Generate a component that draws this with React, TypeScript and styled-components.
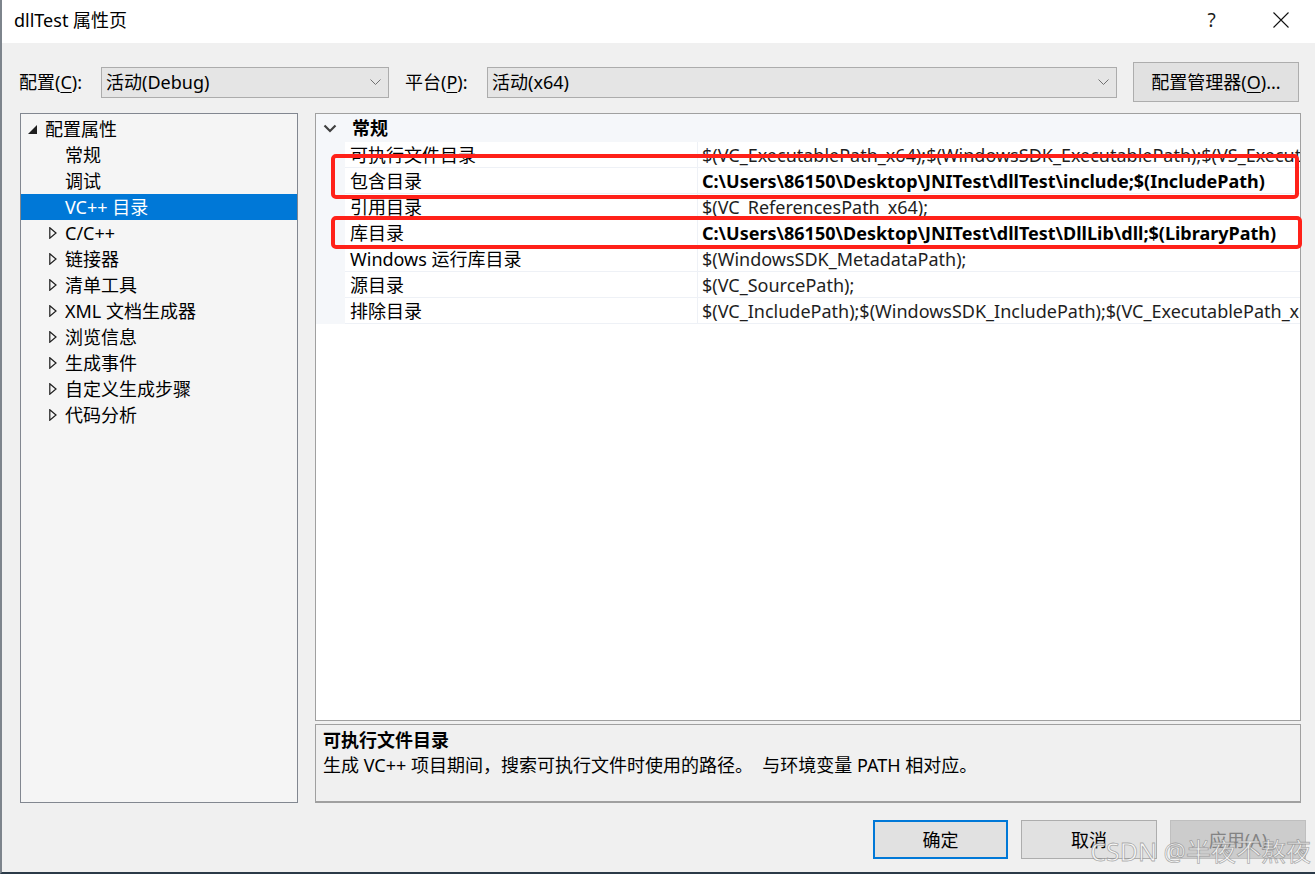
import React from "react";
import styled, { createGlobalStyle } from "styled-components";

const GlobalStyle = createGlobalStyle`
  html, body { margin: 0; padding: 0; }
  body {
    background: #f0f0f0;
    font-family: "Noto Sans", "Noto Sans CJK SC", sans-serif;
    font-size: 18px;
    color: #000;
  }
  * { box-sizing: border-box; }
`;

const Window = styled.div`
  position: relative;
  width: 1315px;
  height: 874px;
  display: flex;
  flex-direction: column;
  background: #f0f0f0;
  border-left: 2px solid #7d848c;
  border-bottom: 2px solid #2b3a48;
  overflow: hidden;
`;

const TitleBar = styled.div`
  height: 43px;
  flex: none;
  background: #fff;
  display: flex;
  align-items: center;
  padding-left: 12px;
`;

const Title = styled.div`
  font-size: 18px;
  line-height: 24px;
  margin-top: -3px;
  flex: 1;
`;

const TitleButton = styled.div`
  width: 69px;
  height: 43px;
  display: flex;
  align-items: center;
  justify-content: center;
  font-size: 19px;
  color: #1a1a1a;
  margin-top: -3px;
`;

const Content = styled.div`
  flex: 1;
  min-width: 0;
  display: flex;
  flex-direction: column;
  padding: 19px 14px 0 17px;
`;

const ConfigRow = styled.div`
  height: 40px;
  display: flex;
  align-items: center;
`;

const FieldLabel = styled.div<{ $ml?: number }>`
  width: 82px;
  margin-left: ${(p) => p.$ml ?? 0}px;
  white-space: nowrap;
  line-height: 24px;
  & u { text-decoration-thickness: 1px; text-underline-offset: 3px; }
`;

const Select = styled.div<{ $w: number }>`
  width: ${(p) => p.$w}px;
  height: 31px;
  background: #e5e5e5;
  border: 1px solid #acacac;
  display: flex;
  align-items: center;
  padding: 0 7px 0 4px;
  line-height: 24px;
`;

const SelectText = styled.span`
  flex: 1;
  white-space: nowrap;
`;

const PushButton = styled.div<{ $w: number; $h?: number; $primary?: boolean; $disabled?: boolean; $ml?: number }>`
  width: ${(p) => p.$w}px;
  height: ${(p) => p.$h ?? 39}px;
  margin-left: ${(p) => p.$ml ?? 0}px;
  flex: none;
  display: flex;
  align-items: center;
  justify-content: center;
  background: ${(p) => (p.$disabled ? "#cccccc" : "#e1e1e1")};
  border: ${(p) => (p.$primary ? "2px solid #0078d7" : p.$disabled ? "1px solid #bfbfbf" : "1px solid #adadad")};
  color: ${(p) => (p.$disabled ? "#838383" : "#000")};
  white-space: nowrap;
  line-height: 24px;
  & u { text-decoration-thickness: 1px; text-underline-offset: 3px; }
`;

const Main = styled.div`
  margin-top: 11px;
  height: 690px;
  display: flex;
  gap: 17px;
`;

const Tree = styled.div`
  width: 278px;
  margin-left: 1px;
  flex: none;
  background: #f5f5f5;
  border: 1px solid #828790;
  padding-top: 2px;
`;

const TreeRow = styled.div<{ $indent: number; $selected?: boolean }>`
  height: 26px;
  display: flex;
  align-items: center;
  padding-left: ${(p) => p.$indent}px;
  background: ${(p) => (p.$selected ? "#0078d7" : "transparent")};
  color: ${(p) => (p.$selected ? "#fff" : "#000")};
  white-space: nowrap;
  line-height: 24px;
`;

const Expander = styled.span<{ $w: number }>`
  width: ${(p) => p.$w}px;
  flex: none;
  display: flex;
  align-items: center;
`;

const RightColumn = styled.div`
  flex: 1;
  min-width: 0;
  display: flex;
  flex-direction: column;
  gap: 3px;
`;

const Grid = styled.div`
  position: relative;
  height: 608px;
  background: #fff;
  border: 1px solid #a0a0a0;
`;

const GridInner = styled.div`
  height: 100%;
  overflow: hidden;
`;

const CategoryRow = styled.div`
  height: 28px;
  display: flex;
  align-items: center;
  background: #f5f7fa;
  padding-left: 7px;
  font-weight: 700;
  line-height: 24px;
`;

const CategoryChevron = styled.span`
  width: 29px;
  flex: none;
  display: flex;
  align-items: center;
`;

const PropRow = styled.div`
  height: 26px;
  display: flex;
  background: #f5f7fa;
`;

const NameCell = styled.div`
  margin-left: 29px;
  width: 352px;
  flex: none;
  background: #fff;
  border-bottom: 1px solid #eef1f6;
  display: flex;
  align-items: center;
  padding-left: 5px;
  white-space: nowrap;
  line-height: 24px;
`;

const ValueCell = styled.div<{ $bold?: boolean }>`
  flex: 1;
  min-width: 0;
  background: #fff;
  border-left: 1px solid #eef1f6;
  border-bottom: 1px solid #eef1f6;
  display: flex;
  align-items: center;
  padding-left: 4px;
  white-space: nowrap;
  overflow: hidden;
  font-weight: ${(p) => (p.$bold ? 700 : 400)};
  color: ${(p) => (p.$bold ? "#000" : "#1e1e1e")};
  line-height: 24px;
`;

const Annotation = styled.div<{ $top: number; $left: number; $w: number; $h: number }>`
  position: absolute;
  top: ${(p) => p.$top}px;
  left: ${(p) => p.$left}px;
  width: ${(p) => p.$w}px;
  height: ${(p) => p.$h}px;
  border: 4px solid #ff2119;
  border-radius: 5px;
  pointer-events: none;
`;

const Description = styled.div`
  height: 79px;
  background: #f0f0f0;
  border: 1px solid #a0a0a0;
  border-bottom-width: 2px;
  padding: 3px 7px;
  line-height: 25px;
  white-space: pre;
`;

const DescTitle = styled.div`
  font-weight: 700;
`;

const Footer = styled.div`
  margin-top: 17px;
  margin-right: -5px;
  display: flex;
  justify-content: flex-end;
  gap: 13px;
`;

const Watermark = styled.div`
  position: absolute;
  right: 4px;
  bottom: 5px;
  font-size: 25px;
  line-height: 32px;
  color: rgba(255, 255, 255, 0.78);
  -webkit-text-stroke: 0.8px rgba(110, 110, 110, 0.55);
  white-space: nowrap;
  pointer-events: none;
`;

const Chevron = () => (
  <svg width="11" height="7" viewBox="0 0 11 7">
    <polyline points="0.5,0.5 5.5,5.5 10.5,0.5" fill="none" stroke="#707070" strokeWidth="1" />
  </svg>
);

const FilledTri = () => (
  <svg width="9" height="9" viewBox="0 0 9 9">
    <polygon points="9,0 9,9 0,9" fill="#1e1e1e" />
  </svg>
);

const OpenTri = () => (
  <svg width="8" height="12" viewBox="0 0 8 12">
    <polygon points="0.8,0.8 7,6 0.8,11.2" fill="none" stroke="#1e1e1e" strokeWidth="1.2" />
  </svg>
);

const CloseIcon = () => (
  <svg width="16" height="16" viewBox="0 0 16 16">
    <path d="M0.5 0.5 L15.5 15.5 M15.5 0.5 L0.5 15.5" stroke="#111" strokeWidth="1.1" />
  </svg>
);

const DownChevron = () => (
  <svg width="14" height="9" viewBox="0 0 14 9">
    <polyline points="1.5,1.5 7,7 12.5,1.5" fill="none" stroke="#404040" strokeWidth="2.2" />
  </svg>
);

const treeItems: { label: string; kind: "root" | "leaf" | "branch"; selected?: boolean }[] = [
  { label: "配置属性", kind: "root" },
  { label: "常规", kind: "leaf" },
  { label: "调试", kind: "leaf" },
  { label: "VC++ 目录", kind: "leaf", selected: true },
  { label: "C/C++", kind: "branch" },
  { label: "链接器", kind: "branch" },
  { label: "清单工具", kind: "branch" },
  { label: "XML 文档生成器", kind: "branch" },
  { label: "浏览信息", kind: "branch" },
  { label: "生成事件", kind: "branch" },
  { label: "自定义生成步骤", kind: "branch" },
  { label: "代码分析", kind: "branch" },
];

const props: { name: string; value: string; bold?: boolean }[] = [
  {
    name: "可执行文件目录",
    value:
      "$(VC_ExecutablePath_x64);$(WindowsSDK_ExecutablePath);$(VS_ExecutablePath);$(MSBuild_ExecutablePath);$(FxCopDir);$(PATH);",
  },
  { name: "包含目录", value: "C:\\Users\\86150\\Desktop\\JNITest\\dllTest\\include;$(IncludePath)", bold: true },
  { name: "引用目录", value: "$(VC_ReferencesPath_x64);" },
  { name: "库目录", value: "C:\\Users\\86150\\Desktop\\JNITest\\dllTest\\DllLib\\dll;$(LibraryPath)", bold: true },
  { name: "Windows 运行库目录", value: "$(WindowsSDK_MetadataPath);" },
  { name: "源目录", value: "$(VC_SourcePath);" },
  {
    name: "排除目录",
    value:
      "$(VC_IncludePath);$(WindowsSDK_IncludePath);$(VC_ExecutablePath_x64);$(VC_LibraryPath_x64);$(MSBuildToolsPath);",
  },
];

export default function App() {
  return (
    <>
      <GlobalStyle />
      <Window>
        <TitleBar>
          <Title>dllTest 属性页</Title>
          <TitleButton>?</TitleButton>
          <TitleButton>
            <CloseIcon />
          </TitleButton>
        </TitleBar>
        <Content>
          <ConfigRow>
            <FieldLabel>
              配置(<u>C</u>):
            </FieldLabel>
            <Select $w={288}>
              <SelectText>活动(Debug)</SelectText>
              <Chevron />
            </Select>
            <FieldLabel $ml={16}>
              平台(<u>P</u>):
            </FieldLabel>
            <Select $w={630}>
              <SelectText>活动(x64)</SelectText>
              <Chevron />
            </Select>
            <PushButton $w={166} $h={40} $ml={16}>
              配置管理器(<u>O</u>)...
            </PushButton>
          </ConfigRow>
          <Main>
            <Tree>
              {treeItems.map((it) => (
                <TreeRow
                  key={it.label}
                  $indent={it.kind === "root" ? 7 : it.kind === "branch" ? 28 : 44}
                  $selected={it.selected}
                >
                  {it.kind === "root" && (
                    <Expander $w={17}>
                      <FilledTri />
                    </Expander>
                  )}
                  {it.kind === "branch" && (
                    <Expander $w={16}>
                      <OpenTri />
                    </Expander>
                  )}
                  {it.label}
                </TreeRow>
              ))}
            </Tree>
            <RightColumn>
              <Grid>
                <GridInner>
                  <CategoryRow>
                    <CategoryChevron>
                      <DownChevron />
                    </CategoryChevron>
                    常规
                  </CategoryRow>
                  {props.map((p) => (
                    <PropRow key={p.name}>
                      <NameCell>{p.name}</NameCell>
                      <ValueCell $bold={p.bold}>{p.value}</ValueCell>
                    </PropRow>
                  ))}
                </GridInner>
                <Annotation $top={40} $left={15} $w={968} $h={45} />
                <Annotation $top={102} $left={15} $w={971} $h={33} />
              </Grid>
              <Description>
                <DescTitle>可执行文件目录</DescTitle>
                <div>{"生成 VC++ 项目期间，搜索可执行文件时使用的路径。  与环境变量 PATH 相对应。"}</div>
              </Description>
            </RightColumn>
          </Main>
          <Footer>
            <PushButton $w={135} $primary>
              确定
            </PushButton>
            <PushButton $w={136}>取消</PushButton>
            <PushButton $w={136} $disabled>
              应用(A)
            </PushButton>
          </Footer>
        </Content>
        <Watermark>CSDN @半夜不熬夜</Watermark>
      </Window>
    </>
  );
}
